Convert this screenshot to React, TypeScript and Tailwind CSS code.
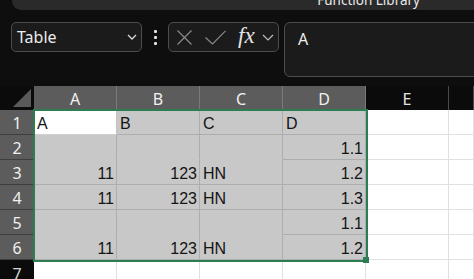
import React from "react";

const data: string[][] = [
  ["A", "B", "C", "D"],
  ["", "", "", "1.1"],
  ["11", "123", "HN", "1.2"],
  ["11", "123", "HN", "1.3"],
  ["", "", "", "1.1"],
  ["11", "123", "HN", "1.2"],
];

const isNum = (v: string) => /^[0-9.]+$/.test(v);

function Cell({ r, c }: { r: number; c: number }) {
  const selected = r < 6 && c < 4;
  const active = r === 0 && c === 0;
  const noBottom = (r === 1 || r === 4) && c < 3;
  const v = selected ? data[r][c] : "";
  let cls =
    "flex items-end pb-[2px] border-r border-b font-['Liberation_Sans',Arial,sans-serif] text-[16px] leading-[16px] text-[#141414] whitespace-nowrap overflow-hidden ";
  if (active) {
    cls += "bg-white border-r-[#c4c4c4] border-b-[#d0d0d0] ";
  } else if (selected) {
    cls += noBottom
      ? "bg-[#c8c8c8] border-r-[#adadad] border-b-[#c8c8c8] "
      : "bg-[#c8c8c8] border-r-[#adadad] border-b-[#adadad] ";
  } else {
    cls += "bg-white border-r-[#e0e0e0] border-b-[#e0e0e0] ";
  }
  cls += v && isNum(v) ? "justify-end pr-[2px]" : "justify-start pl-[3px]";
  return <div className={cls}>{v}</div>;
}

export default function App() {
  const cols = ["A", "B", "C", "D", "E", ""];
  return (
    <div className="w-[474px] h-[279px] overflow-hidden bg-[#0e0e0e] flex flex-col font-['Noto_Sans',sans-serif]">
      {/* ribbon bottom */}
      <div className="ml-[12px] h-[10px] shrink-0 rounded-bl-[9px] bg-[#2a2a2a] flex justify-end pr-[54px] overflow-hidden">
        <span className="-mt-[7px] text-[13.5px] leading-[14px] text-[#e8e8e8] whitespace-nowrap">
          Function Library
        </span>
      </div>

      {/* formula bar */}
      <div className="mt-[12px] flex items-start pl-[11px] h-[55px] shrink-0">
        <div className="w-[131px] h-[30px] shrink-0 rounded-[5px] border border-[#4d4d4d] bg-[#1b1b1b] flex items-center justify-between pl-[5px] pr-[4px]">
          <span className="text-[16px] leading-[20px] text-[#ececec]">Table</span>
          <svg width="10" height="6" viewBox="0 0 10 6">
            <path d="M1 1 L5 5 L9 1" fill="none" stroke="#d8d8d8" strokeWidth="1.3" />
          </svg>
        </div>
        <div className="w-[26px] h-[30px] shrink-0 flex flex-col items-center justify-center gap-[3px]">
          <div className="w-[3px] h-[3px] rounded-[1px] bg-[#e0e0e0]" />
          <div className="w-[3px] h-[3px] rounded-[1px] bg-[#e0e0e0]" />
          <div className="w-[3px] h-[3px] rounded-[1px] bg-[#e0e0e0]" />
        </div>
        <div className="w-[111px] h-[30px] shrink-0 rounded-[5px] border border-[#4d4d4d] bg-[#1b1b1b] flex items-center pl-[8px]">
          <svg className="shrink-0" width="15" height="15" viewBox="0 0 15 15">
            <path d="M0.5 0.5 L14.5 14.5 M14.5 0.5 L0.5 14.5" stroke="#8a8a8a" strokeWidth="1.2" fill="none" />
          </svg>
          <svg className="ml-[13px] shrink-0" width="21" height="15" viewBox="0 0 21 15">
            <path d="M0.5 7.5 L7.5 14 L20.5 0.8" stroke="#8a8a8a" strokeWidth="1.2" fill="none" />
          </svg>
          <span className="ml-[12px] font-['Liberation_Serif',serif] italic text-[23px] leading-[20px] text-[#e4e4e4] -mt-[2px]">
            fx
          </span>
          <svg className="ml-[7px] shrink-0" width="12" height="7" viewBox="0 0 12 7">
            <path d="M1 1 L6 6 L11 1" fill="none" stroke="#bdbdbd" strokeWidth="1.2" />
          </svg>
        </div>
        <div className="ml-[5px] w-[220px] h-[55px] shrink-0 rounded-[6px] border border-[#4d4d4d] bg-[#1b1b1b] pl-[13px] pt-[4px]">
          <span className="text-[16px] leading-[20px] text-[#ececec]">A</span>
        </div>
      </div>

      {/* sheet */}
      <div className="mt-[9px] relative">
        <div className="grid grid-cols-[34px_83px_83px_83px_83px_83px_1fr] grid-rows-[24px_repeat(7,25px)]">
          {/* corner */}
          <div className="bg-[#0b0b0b] relative">
            <svg className="absolute left-0 top-0" width="34" height="24" viewBox="0 0 34 24">
              <path d="M13 21 L31 21 L31 3 Z" fill="#5a5a5a" />
            </svg>
          </div>
          {cols.map((c, i) =>
            i < 4 ? (
              <div
                key={"h" + i}
                className="bg-[#5c5c5c] border-r border-r-[#7a7a7a] flex items-center justify-center pt-[1px] text-[16px] leading-[18px] text-[#f0f0f0]"
              >
                {c}
              </div>
            ) : (
              <div
                key={"h" + i}
                className="bg-[#0b0b0b] border-r border-r-[#4a4a4a] flex items-center justify-center pt-[1px] text-[16px] leading-[18px] text-[#e2e2e2]"
              >
                {c}
              </div>
            )
          )}
          {Array.from({ length: 7 }).map((_, r) => (
            <React.Fragment key={"r" + r}>
              {r < 6 ? (
                <div className="bg-[#5c5c5c] border-b border-b-[#3e3e3e] flex items-center justify-center pt-[2px] text-[16px] leading-[18px] text-[#f0f0f0]">
                  {r + 1}
                </div>
              ) : (
                <div className="bg-[#0b0b0b] flex items-center justify-center pt-[2px] text-[16px] leading-[18px] text-[#d6d6d6]">
                  {r + 1}
                </div>
              )}
              {cols.map((_, c) => (
                <Cell key={"c" + r + "-" + c} r={r} c={c} />
              ))}
            </React.Fragment>
          ))}
        </div>
        {/* selection overlay */}
        <div className="absolute left-[33px] top-[23px] w-[335px] h-[153px] border-2 border-[#2e7d52] pointer-events-none" />
        <div className="absolute left-[363px] top-[171px] w-[6px] h-[6px] bg-[#2e7d52] pointer-events-none" />
      </div>
    </div>
  );
}
